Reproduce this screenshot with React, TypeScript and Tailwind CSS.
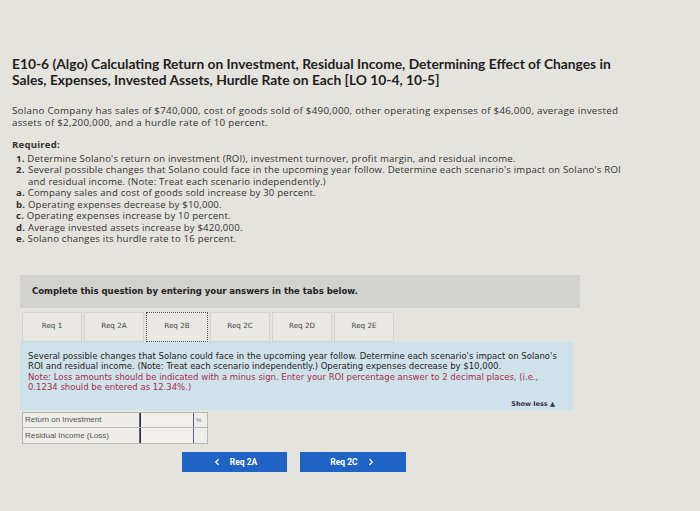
import { ChevronLeft, ChevronRight } from 'lucide-react';

const TABS = ['Req 1', 'Req 2A', 'Req 2B', 'Req 2C', 'Req 2D', 'Req 2E'];

const ITEMS = [
  { k: 'a.', t: 'Company sales and cost of goods sold increase by 30 percent.' },
  { k: 'b.', t: 'Operating expenses decrease by $10,000.' },
  { k: 'c.', t: 'Operating expenses increase by 10 percent.' },
  { k: 'd.', t: 'Average invested assets increase by $420,000.' },
  { k: 'e.', t: 'Solano changes its hurdle rate to 16 percent.' },
];

export default function App() {
  return (
    <div className="h-[511px] w-[700px] overflow-hidden bg-[#e5e3de] text-[#2a2a2a] [font-family:Lato,'Open_Sans',sans-serif]">
      <div className="px-[12px] pt-[56px]">
        {/* Heading */}
        <h1 className="text-[13.8px] font-bold leading-[16px] text-[#1f1f1f]">
          E10-6 (Algo) Calculating Return on Investment, Residual Income, Determining Effect of Changes in
          <br />
          Sales, Expenses, Invested Assets, Hurdle Rate on Each [LO 10-4, 10-5]
        </h1>

        <p className="mt-[17px] text-[9.8px] leading-[11.5px] tracking-[0.25px] text-[#333] [font-family:'Open_Sans',sans-serif]">
          Solano Company has sales of $740,000, cost of goods sold of $490,000, other operating expenses of $46,000, average invested
          <br />
          assets of $2,200,000, and a hurdle rate of 10 percent.
        </p>

        {/* Required */}
        <div className="mt-[11px] text-[9.6px] leading-[11.5px] tracking-[0.2px] text-[#333] [font-family:'Open_Sans',sans-serif]">
          <div className="mb-[2px] font-bold">Required:</div>
          <div className="pl-[4px]">
            <div>
              <span className="font-bold">1.</span> Determine Solano's return on investment (ROI), investment turnover, profit margin, and residual income.
            </div>
            <div className="flex">
              <span className="w-[12px] shrink-0 font-bold">2.</span>
              <span>
                Several possible changes that Solano could face in the upcoming year follow. Determine each scenario's impact on Solano's ROI
                <br />
                and residual income. (Note: Treat each scenario independently.)
              </span>
            </div>
            {ITEMS.map((it) => (
              <div key={it.k}>
                <span className="font-bold">{it.k}</span> {it.t}
              </div>
            ))}
          </div>
        </div>
      </div>

      {/* Answer area */}
      <div className="ml-[20px] mt-[30px] w-[560px] [font-family:'DejaVu_Sans',Verdana,sans-serif]">
        <div className="flex h-[33px] items-center bg-[#d2d2cf] px-[12px] text-[8.5px] font-bold text-[#222]">
          Complete this question by entering your answers in the tabs below.
        </div>

        <div className="mt-[4px] flex gap-[2px] pl-[2px]">
          {TABS.map((t) => (
            <div
              key={t}
              className={
                t === 'Req 2B'
                  ? 'flex h-[30px] w-[62px] items-center justify-center border border-dotted border-[#555] bg-[#e9e8e4] text-[7.2px] text-[#444]'
                  : 'flex h-[30px] w-[60px] items-center justify-center border border-[#d4d3cf] bg-[#e9e8e4] text-[7.2px] text-[#444]'
              }
            >
              {t}
            </div>
          ))}
        </div>

        <div className="w-[553px] bg-[#d0e2e9] px-[8px] pb-[1px] pt-[9px] text-[8.5px] leading-[10.6px]">
          <div className="text-[#222]">
            Several possible changes that Solano could face in the upcoming year follow. Determine each scenario's impact on Solano's
            <br />
            ROI and residual income. (Note: Treat each scenario independently.) Operating expenses decrease by $10,000.
          </div>
          <div className="text-[#a0304a]">
            Note: Loss amounts should be indicated with a minus sign. Enter your ROI percentage answer to 2 decimal places, (i.e.,
            <br />
            0.1234 should be entered as 12.34%.)
          </div>
          <div className="mt-[6px] flex justify-end pr-[10px] text-[6.5px] font-bold text-[#334]">Show less ▲</div>
        </div>

        {/* Table */}
        <div className="ml-[2px] mt-[2px] w-[186px] border border-[#b8b8b4] [font-family:'Liberation_Sans',Arial,sans-serif] text-[8px] text-[#555]">
          {[
            { l: 'Return on Investment', u: '%' },
            { l: 'Residual Income (Loss)', u: '' },
          ].map((r, i) => (
            <div key={r.l} className={i === 0 ? 'flex h-[15px] border-b border-[#b8b8b4]' : 'flex h-[15px]'}>
              <div className="flex w-[116px] items-center bg-[#eeede9] px-[2px]">{r.l}</div>
              <div className="w-[55px] border-x border-[#5a5f80] bg-[#f1f0ed] shadow-[inset_1px_0_0_#333]" />
              <div className="flex flex-1 items-center bg-[#eeede9] px-[2px] text-[6px] text-[#777]">{r.u}</div>
            </div>
          ))}
        </div>

        {/* Nav buttons */}
        <div className="ml-[162px] mt-[8px] flex gap-[13px] [font-family:Roboto,sans-serif] text-[8.5px] font-bold text-white">
          <div className="flex h-[20px] w-[105px] items-center justify-center gap-[8px] bg-[#1f64c5]">
            <ChevronLeft size={10} strokeWidth={3} />
            Req 2A
          </div>
          <div className="flex h-[20px] w-[106px] items-center justify-center gap-[8px] bg-[#1f64c5]">
            Req 2C
            <ChevronRight size={10} strokeWidth={3} />
          </div>
        </div>
      </div>
    </div>
  );
}
